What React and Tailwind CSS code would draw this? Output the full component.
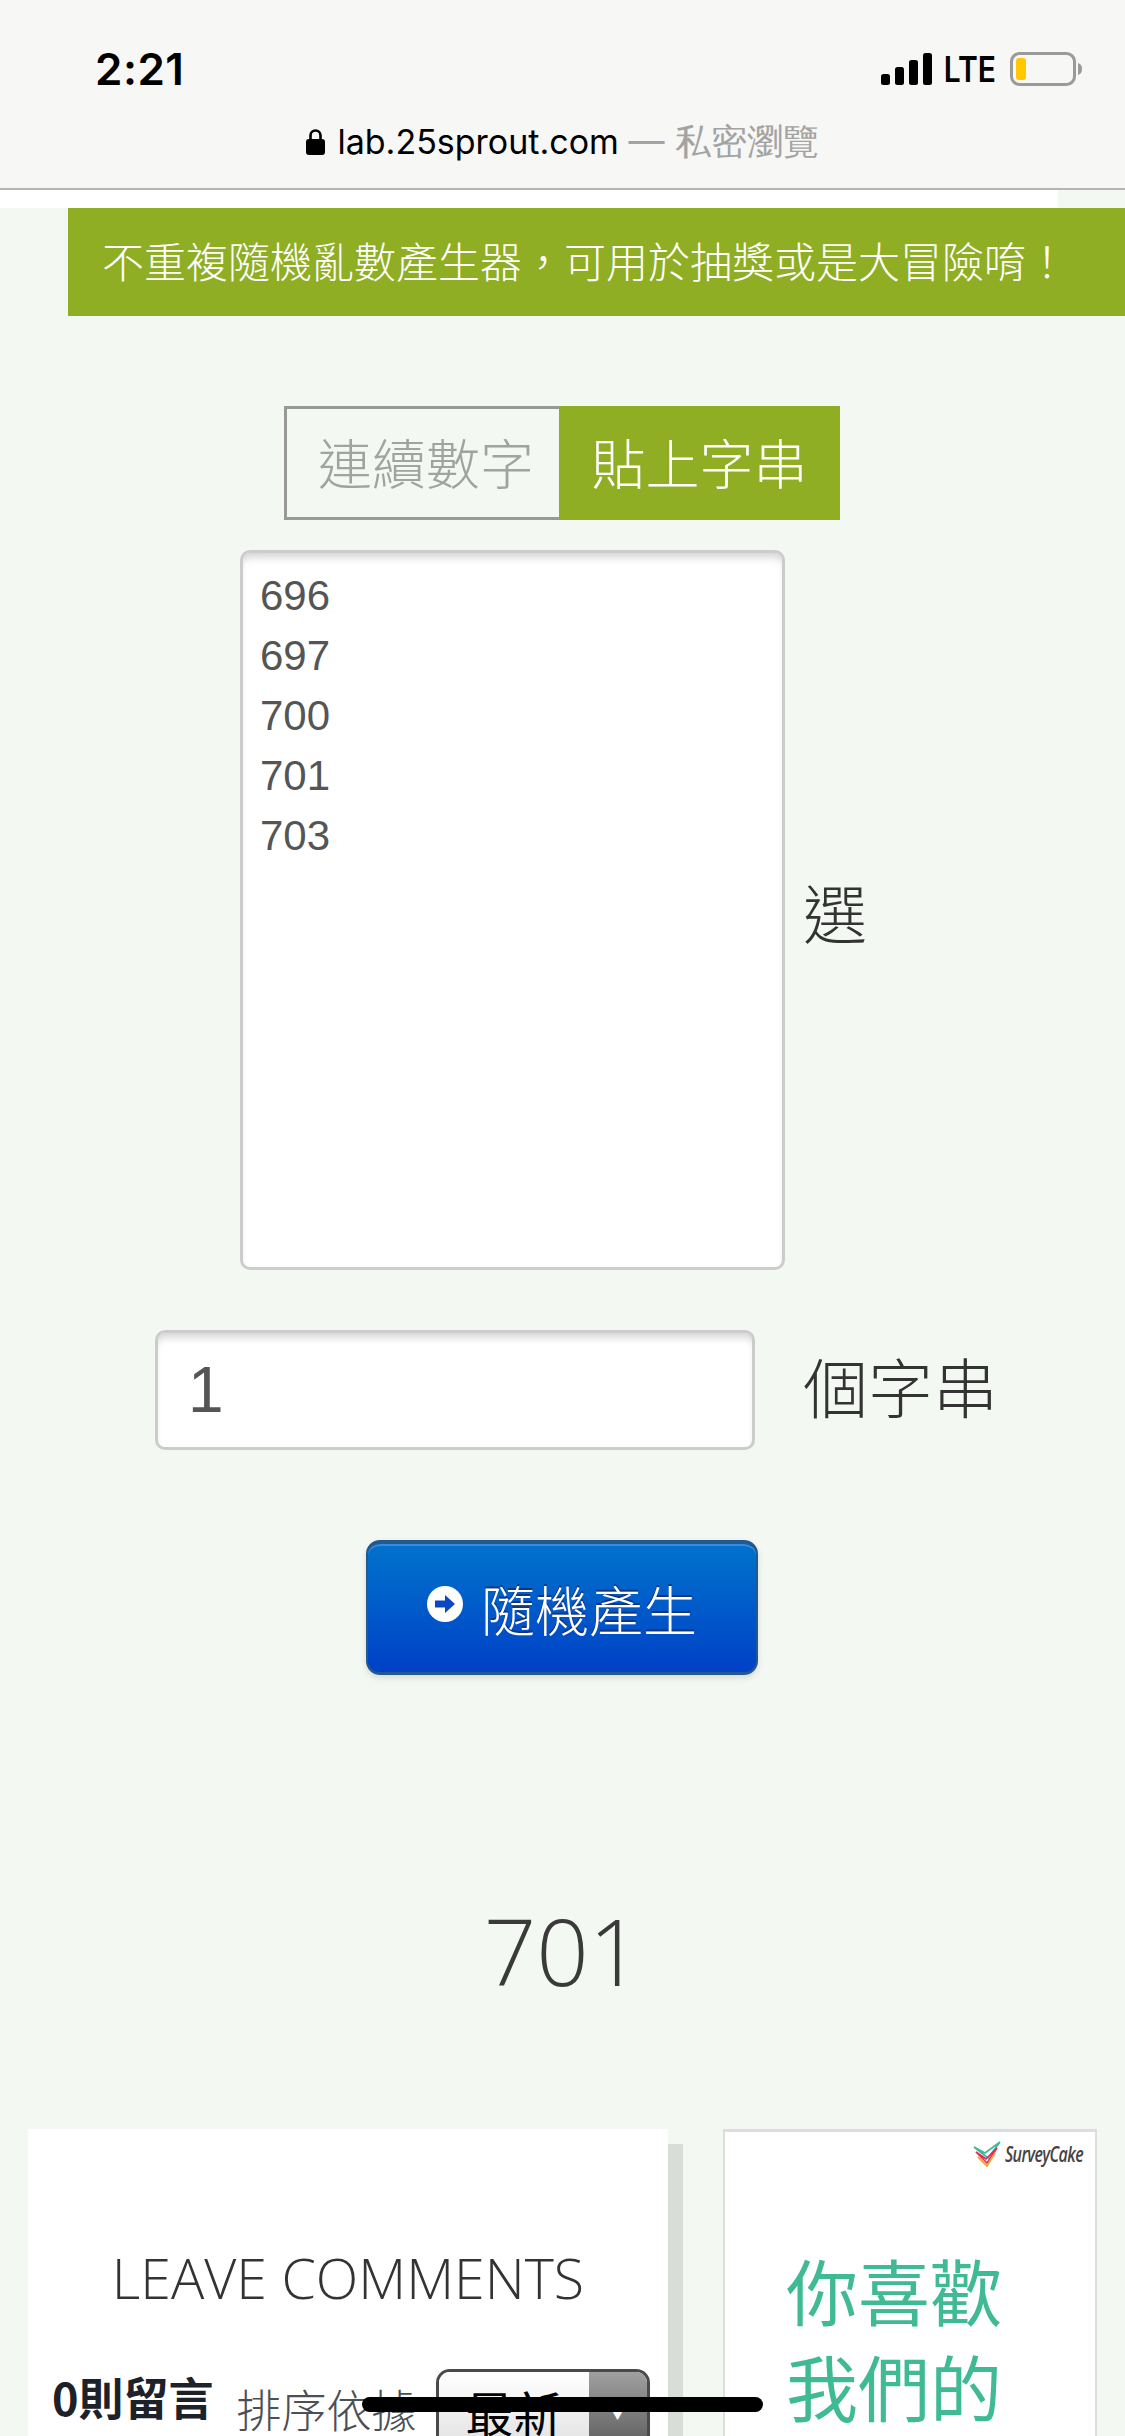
const cjk = '"Noto Sans CJK TC", "Noto Sans", sans-serif';

function Signal() {
  return (
    <svg width="52" height="32" viewBox="0 0 52 32" className="block">
      <rect x="0" y="21" width="9" height="11" rx="2.5" fill="#000" />
      <rect x="14" y="14" width="9" height="18" rx="2.5" fill="#000" />
      <rect x="28" y="7" width="9" height="25" rx="2.5" fill="#000" />
      <rect x="42" y="0" width="9" height="32" rx="2.5" fill="#000" />
    </svg>
  );
}

function Battery() {
  return (
    <svg width="72" height="34" viewBox="0 0 72 34" className="block">
      <rect x="1.5" y="1.5" width="63" height="31" rx="8" fill="none" stroke="#9a9a9a" strokeWidth="3" />
      <rect x="6" y="6" width="10" height="22" rx="3" fill="#ffc800" />
      <path d="M68 11c3 1 4 3 4 6s-1 5-4 6z" fill="#9a9a9a" />
    </svg>
  );
}

function Lock() {
  return (
    <svg width="19" height="27" viewBox="0 0 19 27" className="block">
      <path d="M4.5 12V7.500a5 5 0 0 1 10 0V12" fill="none" stroke="#000" strokeWidth="2.6" />
      <rect x="0" y="11" width="19" height="16" rx="3" fill="#000" />
    </svg>
  );
}

function ArrowBadge() {
  return (
    <svg width="36" height="36" viewBox="0 0 36 36" className="block">
      <circle cx="18" cy="18" r="18" fill="#fff" />
      <path d="M8 14.5h10V9l10 9-10 9v-5.500H8z" fill="#0a48c4" />
    </svg>
  );
}

function CakeMark() {
  return (
    <svg width="28" height="26" viewBox="0 0 28 26" className="block">
      <path d="M1 6l11 6L27 1l-12 16L1 6z" fill="none" stroke="#3dba94" strokeWidth="1.6" />
      <path d="M3 11l10 7L24 7 14 22 3 11z" fill="none" stroke="#e2275f" strokeWidth="1.6" />
      <path d="M5 16l9 9 8-13" fill="none" stroke="#f3a233" strokeWidth="1.8" />
    </svg>
  );
}

export default function App() {
  return (
    <div className="relative h-[2436px] w-[1125px] overflow-hidden bg-[#f4f8f2]" style={{ fontFamily: cjk }}>
      <header className="h-[190px] border-b-2 border-[#b5b5b5] bg-[#f7f7f6]">
        <div className="flex h-[117px] items-start justify-between pl-[95px] pr-[43px] pt-[44px]">
          <span className="text-[44px] font-semibold leading-[50px] tracking-[0.5px] text-black" style={{ fontFamily: 'Inter, sans-serif' }}>2:21</span>
          <div className="mt-[8px] flex items-center">
            <Signal />
            <span className="ml-[11px] mr-[14px] text-[30px] font-semibold leading-[34px] text-black [transform:scaleY(1.18)]" style={{ fontFamily: 'Inter, sans-serif' }}>LTE</span>
            <Battery />
          </div>
        </div>
        <div className="flex h-[48px] items-center justify-center gap-[12px]">
          <Lock />
          <span className="text-[34px] leading-[48px] text-black" style={{ fontFamily: 'Inter, sans-serif' }}>
            lab.25sprout.com <span className="text-[36px] text-[#a3a3a3]">— 私密瀏覽</span>
          </span>
        </div>
      </header>

      <div className="h-[18px] w-[1058px] bg-white" />

      <div className="ml-[68px] flex h-[108px] items-center bg-[#90ae23] pb-[4px] pl-[34px] text-[42px] font-light leading-none text-white whitespace-nowrap">
        不重複隨機亂數產生器，可用於抽獎或是大冒險唷！
      </div>

      <div className="ml-[284px] mt-[90px] flex h-[114px] w-[556px]">
        <div className="flex w-[275px] items-center justify-center border-[3px] border-r-0 border-[#999999] pb-[2px] pl-[6px] text-[54px] font-light leading-none text-[#a0a3a0]">
          連續數字
        </div>
        <div className="flex w-[281px] items-center justify-center bg-[#90ae23] pb-[2px] text-[54px] font-light leading-none text-white">
          貼上字串
        </div>
      </div>

      <div className="ml-[240px] mt-[30px] flex items-center gap-[18px]">
        <div
          className="h-[720px] w-[545px] rounded-[10px] border-[3px] border-[#cccccc] bg-white px-[17px] pt-[13px] text-[42px] leading-[60px] text-[#555555] shadow-[inset_0_8px_8px_-4px_rgba(0,0,0,0.18)]"
          style={{ fontFamily: '"Liberation Sans", sans-serif' }}
        >
          <div>696</div>
          <div>697</div>
          <div>700</div>
          <div>701</div>
          <div>703</div>
        </div>
        <span className="text-[64px] font-light leading-none text-[#333333]">選</span>
      </div>

      <div className="ml-[155px] mt-[60px] flex items-center gap-[48px]">
        <div
          className="flex h-[120px] w-[600px] items-center rounded-[10px] border-[3px] border-[#cccccc] bg-white pl-[30px] text-[64px] leading-none text-[#555555] shadow-[inset_0_8px_8px_-4px_rgba(0,0,0,0.18)]"
          style={{ fontFamily: '"Liberation Sans", sans-serif' }}
        >
          1
        </div>
        <span className="mb-[10px] text-[65px] font-light leading-none text-[#333333]">個字串</span>
      </div>

      <div className="ml-[366px] mt-[90px] flex h-[135px] w-[392px] items-center justify-center gap-[18px] rounded-[14px] border-x-[2px] border-b-[3px] border-t-[4px] border-[#24598f] bg-gradient-to-b from-[#0072cc] via-[#0050c8] via-70% to-[#0040c8] pt-[2px] shadow-[inset_0_2px_0_#3a8bd8,0_3px_6px_rgba(0,0,0,0.12)]">
        <span className="mb-[10px]"><ArrowBadge /></span>
        <span className="text-[54px] font-light leading-none text-white [text-shadow:0_-2px_0_#12357f]">隨機產生</span>
      </div>

      <div className="mt-[226px] text-center text-[92px] font-light leading-[100px] text-[#3a3a3a]" style={{ fontFamily: '"Open Sans", sans-serif' }}>
        701
      </div>

      <div className="ml-[28px] mt-[128px] flex items-start">
        <div className="flex">
          <div className="h-[310px] w-[640px] bg-white">
            <h2 className="mt-[117px] text-center text-[55.5px] font-light leading-[64px] text-[#333333]" style={{ fontFamily: '"Open Sans", sans-serif' }}>
              LEAVE COMMENTS
            </h2>
            <div className="mt-[50px] flex items-start pl-[24px]">
              <span className="mt-[12px] text-[45px] font-bold leading-[50px] text-[#1d2129] whitespace-nowrap">0則留言</span>
              <span className="ml-[23px] mt-[24px] text-[45px] font-light leading-[50px] text-[#4b4f56] whitespace-nowrap">排序依據</span>
              <div className="ml-[19px] mt-[9px] flex h-[90px] w-[214px] overflow-hidden rounded-t-[14px] border-[3px] border-b-0 border-[#4a4a4a]">
                <div className="flex w-[150px] justify-center bg-gradient-to-b from-white to-[#dddddd] pt-[11px] text-[48px] font-normal leading-[56px] text-black">最新</div>
                <div className="flex flex-1 justify-center bg-gradient-to-b from-[#a0a0a0] to-[#555555] pt-[30px] text-[18px] leading-none text-white">▼</div>
              </div>
            </div>
          </div>
          <div className="mt-[15px] h-[295px] w-[15px] bg-[#d8ddd8]" />
        </div>

        <div className="ml-[40px] h-[310px] w-[374px] border-x-[2px] border-t-[3px] border-[#dddddd] bg-white">
          <div className="flex items-center justify-end gap-[4px] pr-[12px] pt-[9px]">
            <CakeMark />
            <span className="text-[16px] font-semibold italic leading-[26px] tracking-[-0.6px] text-[#444444] [transform:scaleY(1.3)]" style={{ fontFamily: '"Open Sans", sans-serif' }}>SurveyCake</span>
          </div>
          <div className="ml-[61px] mt-[74px] text-[72px] font-normal leading-[96px] text-[#3fba94]">
            <div>你喜歡</div>
            <div>我們的</div>
          </div>
        </div>
      </div>

      <div className="absolute left-[362px] top-[2397px] h-[15px] w-[401px] rounded-full bg-black" />
    </div>
  );
}
